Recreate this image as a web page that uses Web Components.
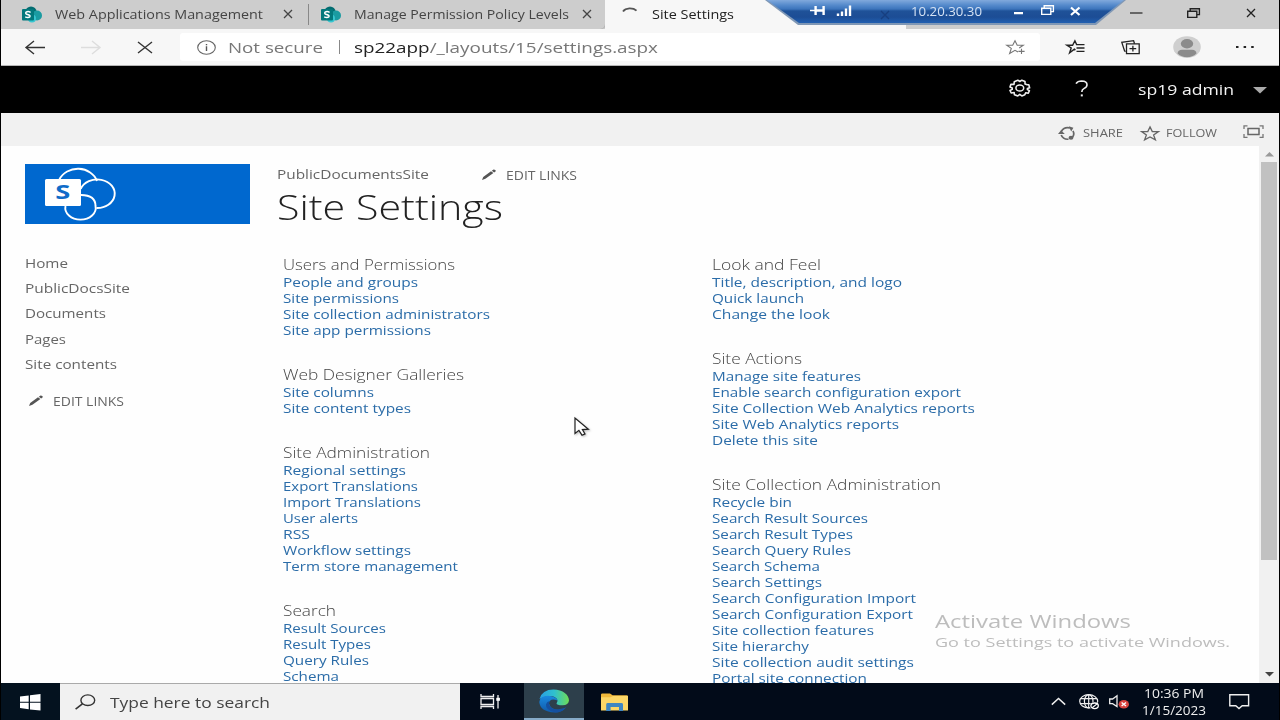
<!DOCTYPE html>
<html lang="en">
<head>
<meta charset="utf-8">
<title>Site Settings</title>
<style>
  body {
    margin: 0;
    width: 1280px;
    height: 720px;
    overflow: hidden;
    background: #000;
    font-family: "Open Sans", "Noto Sans", sans-serif;
  }
</style>
</head>
<body>
<remote-desktop></remote-desktop>

<script>
const ICONS = {
  sharepoint: `<circle cx="9" cy="6" r="5.6" fill="#036c70"/><circle cx="15" cy="9.5" r="5" fill="#1a9ba1"/><circle cx="10" cy="12.5" r="4" fill="#37c6d0"/><rect x="0" y="3" width="12" height="11.4" rx="1" fill="#03787c"/><path d="M8.6 6.3Q6 5 4.2 6.1Q2.8 7.8 5.6 8.5Q8.9 9.4 7.8 10.9Q6 12.2 3.2 10.8" fill="none" stroke="#fff" stroke-width="1.5"/>`,
  close: `<path d="M1 1L9 9M9 1L1 9" stroke="currentColor" stroke-width="1.3"/>`,
  closebold: `<path d="M1 1.5L9.5 9M9.5 1.5L1 9" stroke="currentColor" stroke-width="2.2"/>`,
  spinner: `<path d="M1 4.5Q3 1.8 7.5 1.4Q12 1.3 14.5 3.6" fill="none" stroke="#555" stroke-width="1.9"/>`,
  minimize: `<path d="M0 5H12.5" stroke="currentColor" stroke-width="1.2"/>`,
  dash: `<path d="M0 1.2H9" stroke="currentColor" stroke-width="2.2"/>`,
  restore: `<path d="M.7 3.2H9.8V9.4H.7ZM3.2 3V.7H12.4V6.6H10" fill="none" stroke="currentColor" stroke-width="1.4"/>`,
  back: `<path d="M20 7.5H1M9 1L1 7.5L9 14" fill="none" stroke="currentColor" stroke-width="1.4"/>`,
  forward: `<path d="M0 7.5H19M11 1L19 7.5L11 14" fill="none" stroke="currentColor" stroke-width="1.4"/>`,
  stop: `<path d="M1 1L15 12M15 1L1 12" stroke="currentColor" stroke-width="1.4"/>`,
  info: `<ellipse cx="9.5" cy="7.5" rx="8.8" ry="6.8" fill="none" stroke="#666" stroke-width="1.1"/><path d="M9.5 6.3V11M9.5 4V5.2" stroke="#555" stroke-width="1.4"/>`,
  starplus: `<path d="M12 12L9 10.3L3.6 13.5L5.3 8.4L.8 5.3H6.7L9 .8L11.2 5.3H17.2L13.2 8" fill="none" stroke="#777" stroke-width="1.1"/><path d="M15.5 8.8V14M12.4 11.4H18.6" stroke="#777" stroke-width="1.1"/>`,
  favorites: `<path d="M9.5 9.8L8.4 9.2L3.6 12.9L5.2 8L.9 5.2H6.6L8.9.8L10.6 4.6H18.5M10.5 8H18.5M10.5 11.4H18.5" fill="none" stroke="#222" stroke-width="1.4"/>`,
  collections: `<path d="M5.5 3.8H18.2V13.6H5.5ZM11.9 5.8V11.6M8.5 8.7H15.2M4.6 11.4L3.6 11L.8 2.4L12.6.7L13.4 3.2" fill="none" stroke="#222" stroke-width="1.3"/>`,
  avatar: `<ellipse cx="14" cy="11" rx="13.8" ry="10.8" fill="#cfcfcf"/><ellipse cx="14" cy="7.8" rx="6.2" ry="4.7" fill="#8b8b8b"/><path d="M4.5 17.5Q5 13.8 9 13.8H19Q23 13.8 23.5 17.5Q19.5 21.3 14 21.3T4.5 17.5Z" fill="#8b8b8b"/>`,
  more: `<g fill="#222"><rect x="0" y="0" width="2.5" height="2"/><rect x="7.6" y="0" width="2.5" height="2"/><rect x="15.2" y="0" width="2.5" height="2"/></g>`,
  gear: `<path d="M8.8 1.2L10.8 2.5L12.8 1.2L16 2.6L16 5L18.2 5.8L19.8 5.7L20.6 8.8L18.4 9.6V10.5L20.4 11.6L19.3 14.2L16.8 13.7L15.8 15.7L12.8 16.9L10.8 15.4L8.8 16.9L5.4 15.7L5.2 13.5L2.2 14L1 11.5L3.2 10.4V9L1 8L1.9 5.3L5 5.4L5.3 2.7Z" fill="none" stroke="#eee" stroke-width="1.6" stroke-linejoin="round"/><ellipse cx="10.8" cy="9" rx="3.9" ry="3.1" fill="none" stroke="#eee" stroke-width="1.5"/>`,
  help: `<path d="M1 3.6Q2.6 1 6.6 1Q12 1.2 12 4.7Q12 7 9.2 8.4Q6.8 9.7 6.8 12" fill="none" stroke="#eee" stroke-width="1.6"/><rect x="5.8" y="14.4" width="2" height="2" fill="#eee"/>`,
  caret: `<path d="M0 0H14L7 6.6Z" fill="#aaa"/>`,
  share: `<path d="M3.4 5.2Q6.4.5 12 2M15 4.8Q17.2 9 13.3 12.2M10.5 13.2Q5 13.6 3.2 9" fill="none" stroke="#666" stroke-width="1.7"/><path d="M0 8L3 4.2L6.8 8ZM10.7.2L15.4 1.8L13.2 5.4Z" fill="#666"/><ellipse cx="13" cy="11.7" rx="2.4" ry="2" fill="#666"/>`,
  follow: `<path d="M9 .9L11.3 5.6H17.4L12.6 8.9L14.4 13.8L9 10.9L3.6 13.8L5.4 8.9L.7 5.6H6.8Z" fill="none" stroke="#666" stroke-width="1.3"/>`,
  focus: `<path d="M5 3.4H16V9.6H5Z" fill="none" stroke="#666" stroke-width="1.5"/><path d="M1 4V.8H4.5M16.5.8H20V4M1 9V12.3H4.5M16.5 12.3H20V9" fill="none" stroke="#777" stroke-width="1.3"/>`,
  pencil: `<path d="M0 11L1.2 8L9 2.3L11.4 4.1L3.4 9.8ZM9.8 1.7L11.6.5Q13.3.3 14 2L12.2 3.5Z" fill="#555"/>`,
  logo: `<g fill="none" stroke="#fff" stroke-width="1.9"><path d="M14.4 12.5A20 17.3 0 0 1 52 14"/><path d="M35.7 22A17.5 14.3 0 1 1 51.4 41"/><path d="M36 28Q50.5 28 50.5 39A15.2 11.7 0 1 1 20.5 39"/></g><rect x="0" y="12" width="36" height="27" rx="1.5" fill="#fff"/><text x="17.8" y="32.4" text-anchor="middle" font-size="19" font-weight="700" textLength="15" lengthAdjust="spacingAndGlyphs" fill="#0f6cc9">S</text>`,
  windows: `<path d="M0 2.5L8.7 1.4V7.7H0ZM10 1.2L20.5 0V7.7H10ZM0 8.8H8.7V15.2L0 14ZM10 8.8H20.5V16.5L10 15.4Z" fill="#fff"/>`,
  search: `<ellipse cx="12.8" cy="6.2" rx="6.9" ry="5.3" fill="none" stroke="#333" stroke-width="1.4"/><path d="M7.4 9.8L.6 15.2" stroke="#333" stroke-width="1.6"/>`,
  taskview: `<path d="M1 4.5H13.5V10.5H1ZM1 0V2.5H13.5V0M1 15V12.5H13.5V15M18 1V14.6" fill="none" stroke="#eee" stroke-width="1.3"/><rect x="16.3" y="3.8" width="3.6" height="3" fill="#fff"/>`,
  edge: `<defs><linearGradient id="a" x1="0" x2="1"><stop stop-color="#2a9fe2"/><stop offset=".5" stop-color="#2fc0cf"/><stop offset="1" stop-color="#6fdc55"/></linearGradient><linearGradient id="b" y2="1" x2="0"><stop stop-color="#1b8be0"/><stop offset="1" stop-color="#1059a9"/></linearGradient></defs><path d="M.5 10Q3 .5 14.5.5C24 .5 30 6 30 11.5Q29.5 16 23.5 16.3Q17.6 16.3 17.5 14.5Q19.5 12.4 18 10Q13 4 .5 10Z" fill="url(#a)"/><path d="M.3 13Q1 6.8 9 6.7Q17 7 18.6 11.6Q11 8.5 10 14.2Q11 20.5 19.5 20.7Q24 20.5 27 18.6Q22.5 23.6 15.5 23.6Q1 22.5.3 13Z" fill="url(#b)"/><path d="M10.7 12Q8.6 15 12 18.5Q16 22.3 27 18.6Q23 23.5 16.5 23.6Q6 21 7 15.3Q8 12.3 10.7 12Z" fill="#1550a0"/>`,
  folder: `<path d="M0 1.6Q0 .4 1.4.4H9L11.6 2.3H25.6Q27 2.3 27 3.6V17H0Z" fill="#f0b93b"/><path d="M0 4.2H9.5L12 3H27V17.4H0Z" fill="#fcd767"/><path d="M5.2 18V11.4Q5.2 10 6.8 10H20.4Q22 10 22 11.4V18H18V14H9.6V18Z" fill="#3f87c2"/>`,
  chevron: `<path d="M.8 7.6L7.5 1.4L14.2 7.6" fill="none" stroke="#eee" stroke-width="1.5"/>`,
  globe: `<g fill="none" stroke="#eee" stroke-width="1.2"><ellipse cx="9.7" cy="7.3" rx="9" ry="6.6"/><ellipse cx="9.7" cy="7.3" rx="4.3" ry="6.6"/><path d="M1.5 4.7H18M1 9.7H17.6M9.7.8V14"/></g><ellipse cx="15.6" cy="11.8" rx="5" ry="3.9" fill="#020b19"/><ellipse cx="15.6" cy="11.8" rx="3.7" ry="2.8" fill="none" stroke="#fff" stroke-width="1.3"/><path d="M13.2 13.7L18 9.9" stroke="#fff" stroke-width="1.1"/>`,
  mute: `<path d="M.7 4H3.6L8 .8V11.6L3.6 8.6H.7Z" fill="none" stroke="#eee" stroke-width="1.3"/><ellipse cx="14.8" cy="9.2" rx="5.2" ry="4.3" fill="#d8433e"/><path d="M12.6 7.4L17 11M17 7.4L12.6 11" stroke="#fff" stroke-width="1.3"/>`,
  notice: `<path d="M.8.8H19.6V11.8H13.2L10 14.6L6.8 11.8H.8Z" fill="none" stroke="#eee" stroke-width="1.4"/>`,
  pin: `<path d="M0 4.4H5" stroke="#fff" stroke-width="1.5"/><path d="M5.6 0V9M5.6 4.5H13M13.6 0V9" fill="none" stroke="#fff" stroke-width="2.4"/>`,
  signal: `<path d="M1 8.6V11M5 6.4V11M9 3.4V11M13 .4V11" stroke="#fff" stroke-width="2.4"/>`,
  cursor: `<path d="M1 1V16.5L4.9 13.4L8 18.2L11 16.9L8.4 12.6L14.4 12.2Z" fill="#fff" stroke="#222" stroke-width="1.2"/>`,
  up: `<path d="M0 4.5L4.5 0L9 4.5Z" fill="#999"/>`,
  down: `<path d="M0 0H9L4.5 4.5Z" fill="#444"/>`
};

class UiIcon extends HTMLElement {
  connectedCallback() {
    const w = this.getAttribute('w');
    const h = this.getAttribute('h');
    this.attachShadow({ mode: 'open' }).innerHTML = `
      <style>
        :host { display: block; flex: none; width: ${w}px; height: ${h}px; }
        svg { display: block; overflow: visible; }
      </style>
      <svg width="${w}" height="${h}">${ICONS[this.getAttribute('name')]}</svg>`;
  }
}

// One line of text, stretched horizontally to the width in its w attribute
class FitText extends HTMLElement {
  connectedCallback() {
    const w = Number(this.getAttribute('w'));
    this.attachShadow({ mode: 'open' }).innerHTML = `
      <style>
        :host { display: block; flex: none; width: ${w}px; white-space: nowrap; }
        span { display: inline-block; transform-origin: 0 50%; }
      </style>
      <span><slot></slot></span>`;
    const span = this.shadowRoot.querySelector('span');
    span.style.transform = `scaleX(${w / span.getBoundingClientRect().width})`;
  }
}

class BrowserTab extends HTMLElement {
  connectedCallback() {
    this.attachShadow({ mode: 'open' }).innerHTML = `
      <style>
        :host {
          display: flex;
          align-items: center;
          box-sizing: border-box;
          height: 29px;
          padding-bottom: 1px;
          font-size: 12px;
          color: #444;
        }
        :host([active]) { background: #f7f7f7; color: #222; }
        slot { display: contents; }
      </style>
      <slot></slot>`;
  }
}

class TabStrip extends HTMLElement {
  connectedCallback() {
    this.attachShadow({ mode: 'open' }).innerHTML = `
      <style>
        :host { display: flex; height: 29px; background: #cdcdcd; color: #222; }
        browser-tab { flex: none; box-sizing: border-box; }
        .one {
          width: 308px;
          padding-left: 21px;
          border-right: 1px solid;
          border-image: linear-gradient(transparent 5px, #888 5px, #888 24px, transparent 24px) 1;
        }
        .two { width: 296px; padding-left: 12px; border-radius: 0 0 5px 0; box-shadow: 1px 0 1px #aaa; }
        .three { width: 301px; padding-left: 17px; }
        .buttons { display: flex; align-items: center; padding: 0 0 4px 224px; }
      </style>
      <browser-tab class="one">
        <ui-icon name="sharepoint" w="20" h="17"></ui-icon>
        <fit-text w="208" style="margin-left:13px">Web Applications Management</fit-text>
        <ui-icon name="close" w="10" h="10" style="margin-left:20px"></ui-icon>
      </browser-tab>
      <browser-tab class="two">
        <ui-icon name="sharepoint" w="20" h="17"></ui-icon>
        <fit-text w="215" style="margin-left:13px">Manage Permission Policy Levels</fit-text>
        <ui-icon name="close" w="10" h="10" style="margin-left:13px"></ui-icon>
      </browser-tab>
      <browser-tab class="three" active>
        <ui-icon name="spinner" w="16" h="14"></ui-icon>
        <fit-text w="82" style="margin-left:14px">Site Settings</fit-text>
      </browser-tab>
      <div class="buttons">
        <ui-icon name="minimize" w="13" h="10"></ui-icon>
        <ui-icon name="restore" w="13" h="10" style="margin-left:44px"></ui-icon>
        <ui-icon name="close" w="12" h="10" style="margin-left:46px"></ui-icon>
      </div>`;
  }
}

class ConnectionBar extends HTMLElement {
  connectedCallback() {
    this.attachShadow({ mode: 'open' }).innerHTML = `
      <style>
        :host {
          position: absolute;
          left: 765px;
          top: 0;
          width: 361px;
          height: 25px;
          clip-path: polygon(0 0, 100% 0, 331px 100%, 33px 100%);
          background: #7f97b5;
        }
        .bar {
          display: flex;
          align-items: center;
          box-sizing: border-box;
          height: 24px;
          padding: 0 0 3px 45px;
          clip-path: polygon(2px 0, 359px 0, 330px 23px, 34px 23px);
          background: linear-gradient(#81a9dc 0, #568bcc 5px, #3c75bc 9px, #1f5298 11px, #1c4d95 17px, #2262b5 24px);
          color: #d5e2f4;
          font-size: 12px;
        }
        .white { color: #fff; }
      </style>
      <div class="bar">
        <ui-icon name="pin" w="14" h="9"></ui-icon>
        <ui-icon name="signal" w="15" h="11" style="margin-left:13px"></ui-icon>
        <ui-icon name="close" w="10" h="8" style="margin:7px 0 0 28px;color:#173f80"></ui-icon>
        <fit-text w="71" style="margin:1px 0 0 21px">10.20.30.30</fit-text>
        <ui-icon class="white" name="dash" w="9" h="3" style="margin:5px 0 0 32px"></ui-icon>
        <ui-icon class="white" name="restore" w="13" h="10" style="margin:0 0 2px 18px"></ui-icon>
        <ui-icon class="white" name="closebold" w="10" h="10" style="margin-left:16px"></ui-icon>
      </div>`;
  }
}

class AddressBar extends HTMLElement {
  connectedCallback() {
    this.attachShadow({ mode: 'open' }).innerHTML = `
      <style>
        :host {
          display: flex;
          align-items: center;
          box-sizing: border-box;
          height: 37px;
          padding: 0 0 0 24px;
          background: #f7f7f7;
          border-bottom: 1px solid #b5b5b5;
          color: #333;
        }
        .field {
          display: flex;
          align-items: center;
          box-sizing: border-box;
          width: 860px;
          height: 28px;
          margin: 0 26px 0 27px;
          padding-left: 17px;
          background: #fff;
          border-radius: 3px;
          font-size: 14.5px;
          color: #777;
        }
        .rule { width: 1px; height: 14px; margin: 0 14px 0 16px; background: #888; }
        .host { color: #222; }
      </style>
      <ui-icon name="back" w="20" h="15"></ui-icon>
      <ui-icon name="forward" w="20" h="15" style="margin-left:36px;color:#ddd"></ui-icon>
      <ui-icon name="stop" w="16" h="13" style="margin-left:36px"></ui-icon>
      <div class="field">
        <ui-icon name="info" w="19" h="15"></ui-icon>
        <fit-text w="95" style="margin-left:12px">Not secure</fit-text>
        <div class="rule"></div>
        <fit-text w="304"><span class="host">sp22app</span>/_layouts/15/settings.aspx</fit-text>
        <ui-icon name="starplus" w="19" h="14" style="margin-left:348px"></ui-icon>
      </div>
      <ui-icon name="favorites" w="19" h="14"></ui-icon>
      <ui-icon name="collections" w="19" h="14" style="margin-left:36px"></ui-icon>
      <ui-icon name="avatar" w="28" h="22" style="margin-left:33px"></ui-icon>
      <ui-icon name="more" w="18" h="2" style="margin-left:35px"></ui-icon>`;
  }
}

class SuiteBar extends HTMLElement {
  connectedCallback() {
    this.attachShadow({ mode: 'open' }).innerHTML = `
      <style>
        :host {
          display: flex;
          align-items: center;
          justify-content: flex-end;
          box-sizing: border-box;
          height: 47px;
          padding-right: 12px;
          background: #000;
          color: #f4f4f4;
          font-size: 14px;
          font-weight: 500;
        }
      </style>
      <ui-icon name="gear" w="22" h="18" style="margin-bottom:3px"></ui-icon>
      <ui-icon name="help" w="13" h="17" style="margin:0 0 3px 44px"></ui-icon>
      <fit-text w="96" style="margin-left:50px">sp19 admin</fit-text>
      <ui-icon name="caret" w="14" h="6" style="margin-left:19px"></ui-icon>`;
  }
}

class RibbonBar extends HTMLElement {
  connectedCallback() {
    this.attachShadow({ mode: 'open' }).innerHTML = `
      <style>
        :host {
          display: flex;
          align-items: center;
          justify-content: flex-end;
          box-sizing: border-box;
          height: 33px;
          padding: 5px 15px 0 0;
          background: #f1f1f1;
          color: #666;
          font-size: 11.5px;
        }
      </style>
      <ui-icon name="share" w="18" h="14" style="margin-top:1px"></ui-icon>
      <fit-text w="40" style="margin-left:7px">SHARE</fit-text>
      <ui-icon name="follow" w="18" h="14" style="margin:1px 0 0 18px"></ui-icon>
      <fit-text w="51" style="margin-left:7px">FOLLOW</fit-text>
      <ui-icon name="focus" w="21" h="13" style="margin:0 0 1px 26px"></ui-icon>`;
  }
}

class EditLinks extends HTMLElement {
  connectedCallback() {
    this.attachShadow({ mode: 'open' }).innerHTML = `
      <style>
        :host { display: flex; align-items: center; gap: 10px; height: 18px; font-size: 12px; color: #666; }
        ui-icon { margin-bottom: 2px; }
      </style>
      <ui-icon name="pencil" w="14" h="11"></ui-icon>
      <fit-text w="71">EDIT LINKS</fit-text>`;
  }
}

class SideNav extends HTMLElement {
  connectedCallback() {
    const items = [['Home', 43], ['PublicDocsSite', 105], ['Documents', 81], ['Pages', 41], ['Site contents', 92]];
    this.attachShadow({ mode: 'open' }).innerHTML = `
      <style>
        :host { display: block; width: 225px; font-size: 12.5px; color: #666; }
        .logo { box-sizing: border-box; height: 60px; padding: 3px 0 0 20px; background: #0068cf; }
        nav { display: flex; flex-direction: column; margin-top: 26.5px; }
        fit-text { line-height: 25.4px; }
        edit-links { margin: 15px 0 0 4px; }
      </style>
      <div class="logo"><ui-icon name="logo" w="71" h="52"></ui-icon></div>
      <nav>
        ${items.map(([name, w]) => `<fit-text w="${w}">${name}</fit-text>`).join('')}
        <edit-links></edit-links>
      </nav>`;
  }
}

class SettingsGroup extends HTMLElement {
  connectedCallback() {
    this.attachShadow({ mode: 'open' }).innerHTML = `
      <style>
        :host { display: block; font-size: 12.5px; line-height: 16px; color: #2b6ca8; }
        ::slotted([slot="title"]) { height: 19px; line-height: 18px; font-size: 14px; font-weight: 300; color: #444; }
      </style>
      <slot name="title"></slot>
      <slot></slot>`;
  }
}

const LEFT = [
  ['Users and Permissions', 172, [['People and groups', 135], ['Site permissions', 116], ['Site collection administrators', 207], ['Site app permissions', 148]]],
  ['Web Designer Galleries', 181, [['Site columns', 91], ['Site content types', 128]]],
  ['Site Administration', 147, [['Regional settings', 123], ['Export Translations', 135], ['Import Translations', 138], ['User alerts', 75], ['RSS', 27], ['Workflow settings', 128], ['Term store management', 175]]],
  ['Search', 53, [['Result Sources', 103], ['Result Types', 88], ['Query Rules', 86], ['Schema', 56]]]
];
const RIGHT = [
  ['Look and Feel', 109, [['Title, description, and logo', 190], ['Quick launch', 92], ['Change the look', 118]]],
  ['Site Actions', 90, [['Manage site features', 149], ['Enable search configuration export', 249], ['Site Collection Web Analytics reports', 263], ['Site Web Analytics reports', 187], ['Delete this site', 106]]],
  ['Site Collection Administration', 229, [['Recycle bin', 80], ['Search Result Sources', 156], ['Search Result Types', 141], ['Search Query Rules', 139], ['Search Schema', 108], ['Search Settings', 110], ['Search Configuration Import', 204], ['Search Configuration Export', 201], ['Site collection features', 162], ['Site hierarchy', 97], ['Site collection audit settings', 202], ['Portal site connection', 155]]]
];

class SettingsPage extends HTMLElement {
  connectedCallback() {
    const column = groups => groups.map(([title, w, links]) => `
      <settings-group>
        <fit-text slot="title" w="${w}">${title}</fit-text>
        ${links.map(([text, lw]) => `<fit-text w="${lw}">${text}</fit-text>`).join('')}
      </settings-group>`).join('');
    this.attachShadow({ mode: 'open' }).innerHTML = `
      <style>
        :host { display: block; flex: 1; padding-left: 26.5px; }
        .crumbs { display: flex; align-items: center; gap: 53px; height: 22px; font-size: 12px; color: #666; }
        .crumbs fit-text { margin-bottom: 2px; }
        h1 { margin: -1px 0 0; font-size: 34px; line-height: 44px; font-weight: 300; color: #222; }
        .columns { display: grid; grid-template-columns: 429px auto; padding: 27px 0 0 6px; }
        .column { display: flex; flex-direction: column; gap: 27px; }
      </style>
      <div class="crumbs">
        <fit-text w="152">PublicDocumentsSite</fit-text>
        <edit-links></edit-links>
      </div>
      <h1><fit-text w="226">Site Settings</fit-text></h1>
      <div class="columns">
        <div class="column">${column(LEFT)}</div>
        <div class="column">${column(RIGHT)}</div>
      </div>`;
  }
}

class ScrollRail extends HTMLElement {
  connectedCallback() {
    this.attachShadow({ mode: 'open' }).innerHTML = `
      <style>
        :host {
          display: flex;
          flex-direction: column;
          align-items: center;
          box-sizing: border-box;
          width: 20px;
          padding: 6px 0 6px;
          background: #f1f1f1;
        }
        .thumb { width: 16px; height: 398px; margin: 5px 0 auto; background: #c1c1c1; }
      </style>
      <ui-icon name="up" w="9" h="5"></ui-icon>
      <div class="thumb"></div>
      <ui-icon name="down" w="9" h="5"></ui-icon>`;
  }
}

class ActivateNotice extends HTMLElement {
  connectedCallback() {
    this.attachShadow({ mode: 'open' }).innerHTML = `
      <style>
        :host { position: absolute; left: 935px; top: 610px; color: #bdbdbd; font-size: 13.5px; line-height: 20px; }
        .title { font-size: 18px; line-height: 22px; }
      </style>
      <fit-text class="title" w="196">Activate Windows</fit-text>
      <fit-text w="295">Go to Settings to activate Windows.</fit-text>`;
  }
}

class TaskBar extends HTMLElement {
  connectedCallback() {
    this.attachShadow({ mode: 'open' }).innerHTML = `
      <style>
        :host { display: flex; height: 37px; background: #020b19; color: #eee; }
        .start { display: grid; place-items: center; width: 59px; background: #04121f; }
        .search {
          display: flex;
          align-items: center;
          box-sizing: border-box;
          width: 400px;
          padding-left: 15px;
          background: #f1f1f1;
          border-top: 1px solid #aaa;
          color: #444;
          font-size: 14px;
        }
        .app { display: grid; place-items: center; box-sizing: border-box; width: 60px; }
        .open { background: #2d3f4b; border-bottom: 2px solid #86abc8; margin-left: 4px; }
        .tray { display: flex; align-items: center; margin-left: auto; padding-right: 30px; }
        .clock { width: 66px; margin: 0 21px 0 13px; font-size: 12px; line-height: 17px; font-weight: 500; }
        .clock :first-child { margin-left: 2px; }
      </style>
      <div class="start"><ui-icon name="windows" w="21" h="16"></ui-icon></div>
      <div class="search">
        <ui-icon name="search" w="20" h="16"></ui-icon>
        <fit-text w="160" style="margin-left:15px">Type here to search</fit-text>
      </div>
      <div class="app"><ui-icon name="taskview" w="20" h="15"></ui-icon></div>
      <div class="app open"><ui-icon name="edge" w="30" h="24"></ui-icon></div>
      <div class="app"><ui-icon name="folder" w="27" h="18"></ui-icon></div>
      <div class="tray">
        <ui-icon name="chevron" w="15" h="9"></ui-icon>
        <ui-icon name="globe" w="20" h="15" style="margin-left:13px"></ui-icon>
        <ui-icon name="mute" w="20" h="13" style="margin-left:10px"></ui-icon>
        <div class="clock">
          <fit-text w="60">10:36 PM</fit-text>
          <fit-text w="64">1/15/2023</fit-text>
        </div>
        <ui-icon name="notice" w="20" h="15"></ui-icon>
      </div>`;
  }
}

class RemoteDesktop extends HTMLElement {
  connectedCallback() {
    this.attachShadow({ mode: 'open' }).innerHTML = `
      <style>
        :host {
          display: flex;
          flex-direction: column;
          position: relative;
          box-sizing: border-box;
          width: 1280px;
          height: 720px;
          padding: 0 1px;
          overflow: hidden;
        }
        main { display: flex; flex: 1; min-height: 0; overflow: hidden; background: #fefefe; }
        .page { display: flex; flex: 1; padding: 18px 0 0 24px; }
        .cursor { position: absolute; left: 574px; top: 417px; filter: drop-shadow(1px 1px 1px #bbb); }
      </style>
      <tab-strip></tab-strip>
      <address-bar></address-bar>
      <suite-bar></suite-bar>
      <ribbon-bar></ribbon-bar>
      <main>
        <div class="page">
          <side-nav></side-nav>
          <settings-page></settings-page>
        </div>
        <scroll-rail></scroll-rail>
      </main>
      <task-bar></task-bar>
      <connection-bar></connection-bar>
      <activate-notice></activate-notice>
      <ui-icon class="cursor" name="cursor" w="16" h="19"></ui-icon>`;
  }
}

customElements.define('remote-desktop', RemoteDesktop);
customElements.define('tab-strip', TabStrip);
customElements.define('browser-tab', BrowserTab);
customElements.define('connection-bar', ConnectionBar);
customElements.define('address-bar', AddressBar);
customElements.define('suite-bar', SuiteBar);
customElements.define('ribbon-bar', RibbonBar);
customElements.define('side-nav', SideNav);
customElements.define('settings-page', SettingsPage);
customElements.define('settings-group', SettingsGroup);
customElements.define('edit-links', EditLinks);
customElements.define('scroll-rail', ScrollRail);
customElements.define('activate-notice', ActivateNotice);
customElements.define('task-bar', TaskBar);
customElements.define('ui-icon', UiIcon);
// last, so the styles around the text are in place when it is measured
customElements.define('fit-text', FitText);
</script>
</body>
</html>
